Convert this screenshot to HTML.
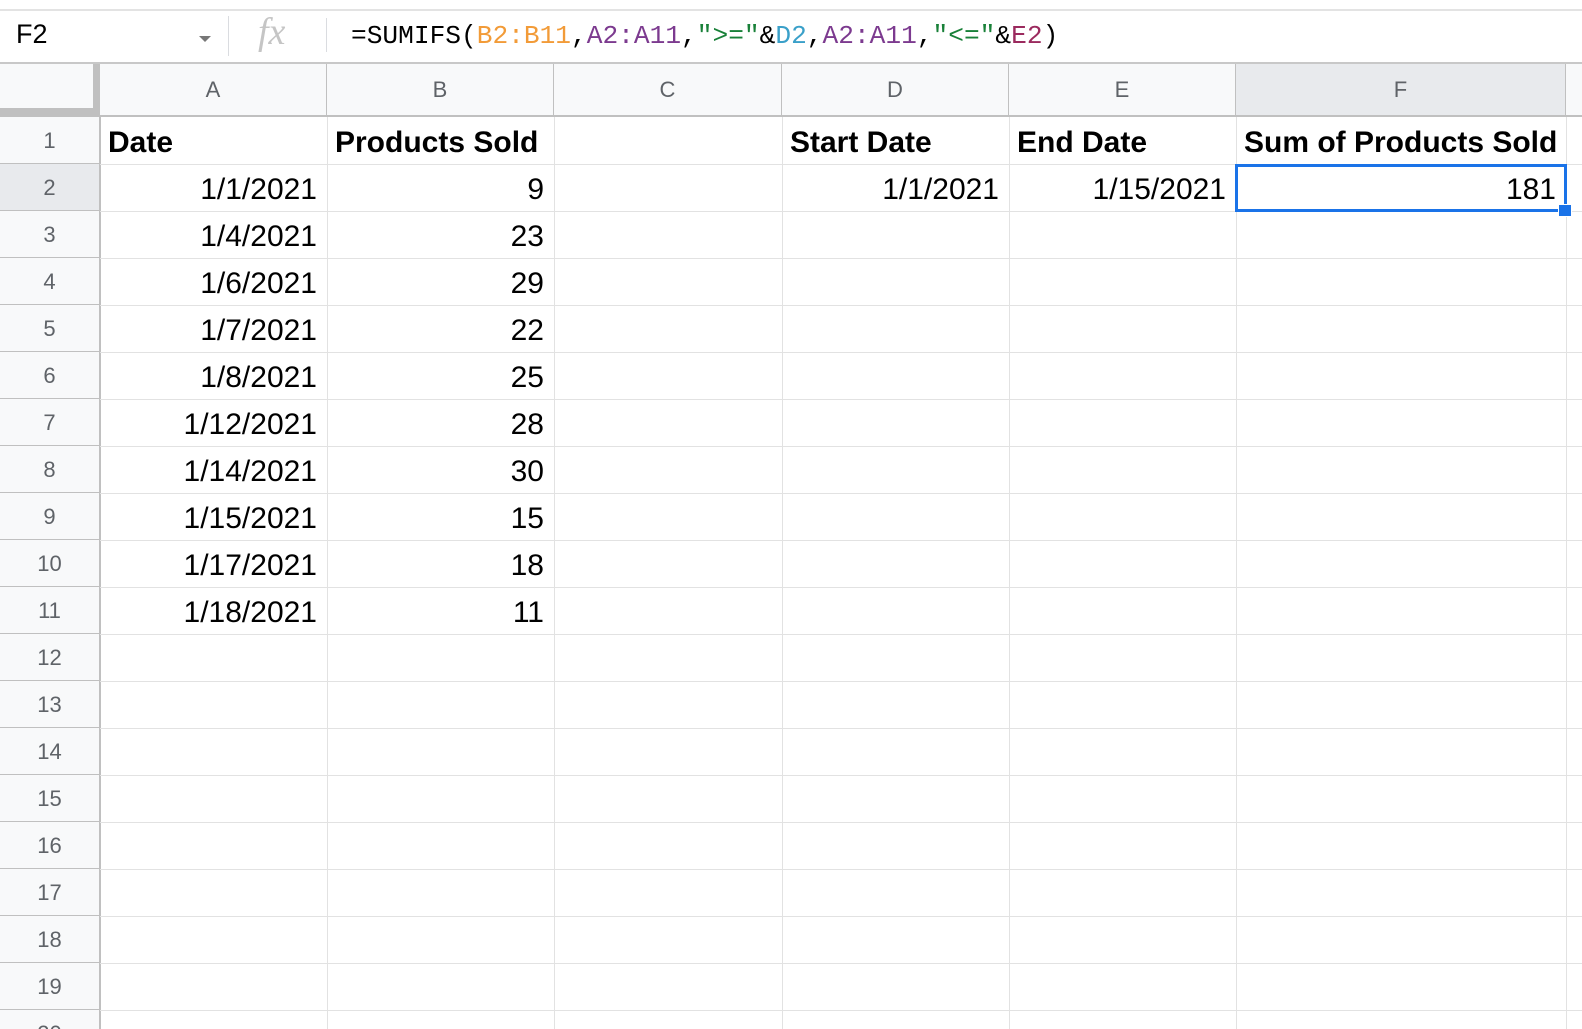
<!DOCTYPE html>
<html><head><meta charset="utf-8"><style>
*{margin:0;padding:0;box-sizing:border-box}
html,body{width:1582px;height:1029px;overflow:hidden}
body{background:#fff;font-family:"Liberation Sans",Arial,sans-serif;position:relative}
.a{position:absolute}
.hl{position:absolute;left:100px;width:1482px;height:1px;background:#e2e2e2}
.vl{position:absolute;top:117px;height:912px;width:1px;background:#e2e2e2}
.rh{position:absolute;left:0;width:99px;height:47px;background:#f8f9fa;border-bottom:1px solid #c0c0c0;color:#5f6368;font-size:22px;text-align:center;line-height:47px;overflow:hidden}
.ch{position:absolute;top:64px;height:53px;background:#f8f9fa;border-right:1px solid #c0c0c0;border-bottom:2px solid #c0c0c0;color:#5f6368;font-size:22px;text-align:center;line-height:52px}
.c{position:absolute;height:47px;font-size:30px;line-height:51px;color:#000;white-space:nowrap}
.r{text-align:right;padding-right:10px}
.l{padding-left:8px;font-weight:bold}
.f{font-family:"Liberation Mono",monospace;font-size:26.2px}
</style></head><body>
<div class="a" style="left:0;top:9px;width:1582px;height:2px;background:#e3e3e3"></div>
<div class="a" style="left:16px;top:19px;font-size:27px;color:#000">F2</div>
<div class="a" style="left:199px;top:36px;width:0;height:0;border-left:6px solid transparent;border-right:6px solid transparent;border-top:6px solid #777"></div>
<div class="a" style="left:228px;top:16px;width:1px;height:40px;background:#dadce0"></div>
<div class="a" style="left:258px;top:10px;font-family:'Liberation Serif',serif;font-style:italic;font-size:38px;color:#c5c5c5">fx</div>
<div class="a" style="left:326px;top:18px;width:1px;height:34px;background:#dadce0"></div>
<div class="a f" style="left:351px;top:21px;color:#000;white-space:nowrap">=SUMIFS(<span style="color:#f29b38">B2:B11</span>,<span style="color:#7c3a8f">A2:A11</span>,<span style="color:#188038">"&gt;="</span>&amp;<span style="color:#3aa0c9">D2</span>,<span style="color:#7c3a8f">A2:A11</span>,<span style="color:#188038">"&lt;="</span>&amp;<span style="color:#9b2a5e">E2</span>)</div>
<div class="a" style="left:0;top:62px;width:1582px;height:2px;background:#c8c8c8"></div>

<div class="a" style="left:0;top:64px;width:100px;height:53px;background:#f8f9fa"></div>
<div class="a" style="left:93px;top:64px;width:7px;height:53px;background:#c0c0c0"></div>
<div class="a" style="left:0;top:108px;width:100px;height:9px;background:#c0c0c0"></div>

<div class="ch" style="left:100px;width:227px">A</div>
<div class="ch" style="left:327px;width:227px">B</div>
<div class="ch" style="left:554px;width:228px">C</div>
<div class="ch" style="left:782px;width:227px">D</div>
<div class="ch" style="left:1009px;width:227px">E</div>
<div class="ch" style="left:1236px;width:330px;background:#e8eaed">F</div>
<div class="ch" style="left:1566px;width:16px;border-right:none"></div>

<div class="a" style="left:99px;top:117px;width:2px;height:912px;background:#c0c0c0"></div>
<div class="rh" style="top:117px">1</div>
<div class="rh" style="top:164px;background:#e8eaed">2</div>
<div class="rh" style="top:211px">3</div>
<div class="rh" style="top:258px">4</div>
<div class="rh" style="top:305px">5</div>
<div class="rh" style="top:352px">6</div>
<div class="rh" style="top:399px">7</div>
<div class="rh" style="top:446px">8</div>
<div class="rh" style="top:493px">9</div>
<div class="rh" style="top:540px">10</div>
<div class="rh" style="top:587px">11</div>
<div class="rh" style="top:634px">12</div>
<div class="rh" style="top:681px">13</div>
<div class="rh" style="top:728px">14</div>
<div class="rh" style="top:775px">15</div>
<div class="rh" style="top:822px">16</div>
<div class="rh" style="top:869px">17</div>
<div class="rh" style="top:916px">18</div>
<div class="rh" style="top:963px">19</div>
<div class="rh" style="top:1010px;height:19px;border-bottom:none">20</div>

<div class="hl" style="top:164px"></div><div class="hl" style="top:211px"></div><div class="hl" style="top:258px"></div>
<div class="hl" style="top:305px"></div><div class="hl" style="top:352px"></div><div class="hl" style="top:399px"></div>
<div class="hl" style="top:446px"></div><div class="hl" style="top:493px"></div><div class="hl" style="top:540px"></div>
<div class="hl" style="top:587px"></div><div class="hl" style="top:634px"></div><div class="hl" style="top:681px"></div>
<div class="hl" style="top:728px"></div><div class="hl" style="top:775px"></div><div class="hl" style="top:822px"></div>
<div class="hl" style="top:869px"></div><div class="hl" style="top:916px"></div><div class="hl" style="top:963px"></div>
<div class="hl" style="top:1010px"></div>
<div class="vl" style="left:327px"></div><div class="vl" style="left:554px"></div><div class="vl" style="left:782px"></div>
<div class="vl" style="left:1009px"></div><div class="vl" style="left:1236px"></div><div class="vl" style="left:1566px"></div>

<div class="c l" style="left:100px;top:117px">Date</div>
<div class="c l" style="left:327px;top:117px">Products Sold</div>
<div class="c l" style="left:782px;top:117px">Start Date</div>
<div class="c l" style="left:1009px;top:117px">End Date</div>
<div class="c l" style="left:1236px;top:117px">Sum of Products Sold</div>

<div class="c r" style="left:100px;width:227px;top:164px">1/1/2021</div>
<div class="c r" style="left:100px;width:227px;top:211px">1/4/2021</div>
<div class="c r" style="left:100px;width:227px;top:258px">1/6/2021</div>
<div class="c r" style="left:100px;width:227px;top:305px">1/7/2021</div>
<div class="c r" style="left:100px;width:227px;top:352px">1/8/2021</div>
<div class="c r" style="left:100px;width:227px;top:399px">1/12/2021</div>
<div class="c r" style="left:100px;width:227px;top:446px">1/14/2021</div>
<div class="c r" style="left:100px;width:227px;top:493px">1/15/2021</div>
<div class="c r" style="left:100px;width:227px;top:540px">1/17/2021</div>
<div class="c r" style="left:100px;width:227px;top:587px">1/18/2021</div>

<div class="c r" style="left:327px;width:227px;top:164px">9</div>
<div class="c r" style="left:327px;width:227px;top:211px">23</div>
<div class="c r" style="left:327px;width:227px;top:258px">29</div>
<div class="c r" style="left:327px;width:227px;top:305px">22</div>
<div class="c r" style="left:327px;width:227px;top:352px">25</div>
<div class="c r" style="left:327px;width:227px;top:399px">28</div>
<div class="c r" style="left:327px;width:227px;top:446px">30</div>
<div class="c r" style="left:327px;width:227px;top:493px">15</div>
<div class="c r" style="left:327px;width:227px;top:540px">18</div>
<div class="c r" style="left:327px;width:227px;top:587px">11</div>

<div class="c r" style="left:782px;width:227px;top:164px">1/1/2021</div>
<div class="c r" style="left:1009px;width:227px;top:164px">1/15/2021</div>
<div class="c r" style="left:1236px;width:330px;top:164px;padding-right:10px">181</div>

<div class="a" style="left:1235px;top:164px;width:332px;height:48px;border:3px solid #1a73e8"></div>
<div class="a" style="left:1558px;top:204px;width:14px;height:13px;background:#1a73e8;border:1px solid #fff"></div>
</body></html>
